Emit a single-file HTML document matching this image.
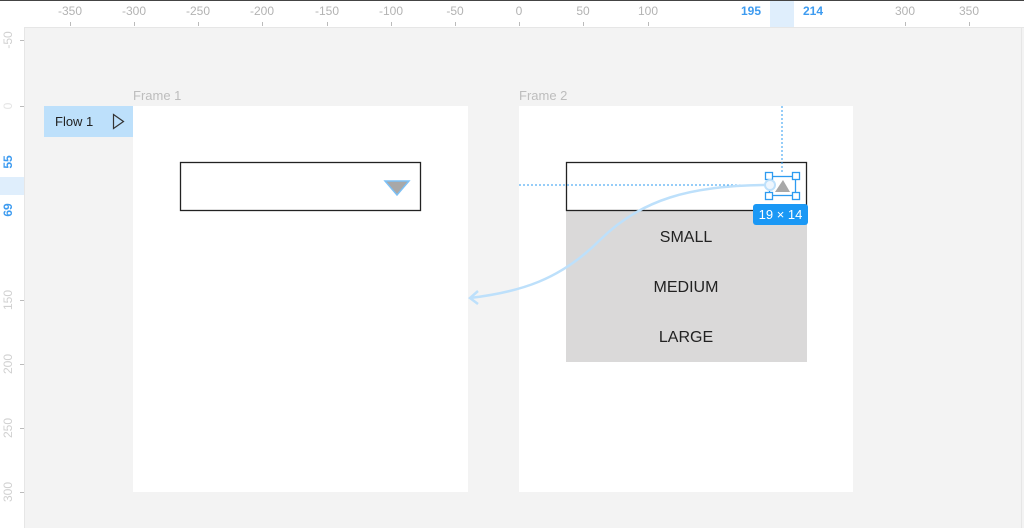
<!DOCTYPE html>
<html><head><meta charset="utf-8"><style>
html,body{margin:0;padding:0;width:1024px;height:528px;overflow:hidden;background:#f3f3f3;font-family:"Liberation Sans",sans-serif}
.abs{position:absolute}
</style></head><body>
<div class="abs" style="left:0;top:0;width:1024px;height:1px;background:#444"></div>
<div class="abs" style="left:0;top:1px;width:1024px;height:26px;background:#fff;border-bottom:1px solid #e6e6e6"></div>
<div class="abs" style="left:0;top:27px;width:24px;height:501px;background:#fff;border-right:1px solid #e6e6e6"></div>
<div class="abs" style="left:770px;top:1px;width:24px;height:26px;background:#dfeefc"></div>
<div class="abs" style="left:0;top:177px;width:24px;height:18px;background:#dfeefc"></div>
<div class="abs" style="left:1021px;top:27px;width:1px;height:501px;background:#e6e6e6"></div>
<svg class="abs" style="left:0;top:0" width="1024" height="528">
<g font-size="12" fill="#b3b3b3" text-anchor="middle">
<text x="70" y="15">-350</text><text x="134" y="15">-300</text><text x="198" y="15">-250</text><text x="262" y="15">-200</text><text x="327" y="15">-150</text><text x="391" y="15">-100</text><text x="455" y="15">-50</text><text x="519" y="15">0</text><text x="583" y="15">50</text><text x="648" y="15">100</text><text x="905" y="15">300</text><text x="969" y="15">350</text>
<text x="751" y="15" fill="#3d9bf0" font-weight="bold">195</text><text x="813" y="15" fill="#3d9bf0" font-weight="bold">214</text>
</g>
<g stroke="#bbb" stroke-width="1">
<path d="M70.5 22v4M134.5 22v4M198.5 22v4M262.5 22v4M327.5 22v4M391.5 22v4M455.5 22v4M519.5 22v4M583.5 22v4M648.5 22v4M905.5 22v4M969.5 22v4"/>
<path d="M20 40.5h4M20 106.5h4M20 300.5h4M20 364.5h4M20 428.5h4M20 492.5h4"/>
</g>
<g font-size="12" fill="#d0d0d0" text-anchor="middle">
<text transform="translate(12,40) rotate(-90)">-50</text>
<text transform="translate(12,106) rotate(-90)" fill="#e4e4e4">0</text>
<text transform="translate(12,300) rotate(-90)">150</text>
<text transform="translate(12,364) rotate(-90)">200</text>
<text transform="translate(12,428) rotate(-90)">250</text>
<text transform="translate(12,492) rotate(-90)">300</text>
<text transform="translate(12,162) rotate(-90)" fill="#3d9bf0" font-weight="bold">55</text>
<text transform="translate(12,210) rotate(-90)" fill="#3d9bf0" font-weight="bold">69</text>
</g>
<text x="133" y="100" font-size="13" fill="#bdbdbd">Frame 1</text>
<text x="519" y="100" font-size="13" fill="#bdbdbd">Frame 2</text>
<rect x="133" y="106" width="335" height="386" fill="#fff"/>
<rect x="519" y="106" width="334" height="386" fill="#fff"/>
<rect x="44" y="106" width="89" height="31" fill="#bde0fb"/>
<text x="55" y="126" font-size="13" fill="#222">Flow 1</text>
<path d="M113.5 114.5l10 7-10 7z" fill="none" stroke="#333" stroke-width="1.2"/>
<rect x="180.5" y="162.5" width="240" height="48" fill="#fff" stroke="#222" stroke-width="1.3"/>
<path d="M385 181h24l-12 14z" fill="#a8a8a8" stroke="#7cc0f5" stroke-width="1.5"/>
<rect x="566" y="211" width="241" height="151" fill="#dad9d9"/>
<rect x="566.5" y="162.5" width="240" height="48" fill="#fff" stroke="#222" stroke-width="1.3"/>
<g font-size="16" fill="#222" text-anchor="middle">
<text x="686" y="242">SMALL</text><text x="686" y="292">MEDIUM</text><text x="686" y="342">LARGE</text>
</g>
<path d="M519 185H766M782 106V173" stroke="#2d9bf0" stroke-width="1" stroke-dasharray="2 2" fill="none"/>
<path d="M770 185C690 185 640 200 600 240S520 292 470 298" stroke="#bde0fb" stroke-width="2.5" fill="none"/>
<path d="M478 291l-8 7 8 6" stroke="#bde0fb" stroke-width="2.5" fill="none"/>
<path d="M775 192h15l-7-12z" fill="#a8a8a8"/>
<rect x="769.5" y="176.5" width="26" height="19" fill="none" stroke="#2d9bf0" stroke-width="1.3"/>
<g fill="#fff" stroke="#2d9bf0" stroke-width="1.3"><rect x="765.5" y="172.5" width="7" height="7"/><rect x="792.5" y="172.5" width="7" height="7"/><rect x="765.5" y="192.5" width="7" height="7"/><rect x="792.5" y="192.5" width="7" height="7"/></g>
<circle cx="770" cy="185" r="5" fill="#eef6fe" stroke="#bde0fb" stroke-width="2"/>
<rect x="753" y="204" width="55" height="21" rx="3" fill="#1a98f5"/>
<text x="780.5" y="219" font-size="13" fill="#fff" text-anchor="middle">19 × 14</text>
</svg>
</body></html>
